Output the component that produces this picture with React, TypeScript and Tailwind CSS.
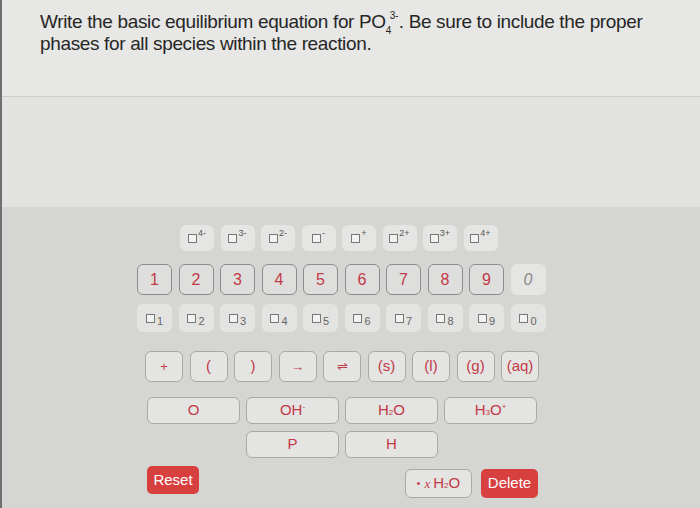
import React from "react";

const charges = ["4-", "3-", "2-", "-", "+", "2+", "3+", "4+"];
const digits = ["1", "2", "3", "4", "5", "6", "7", "8", "9", "0"];
const subs = ["1", "2", "3", "4", "5", "6", "7", "8", "9", "0"];
const symbols = ["+", "(", ")", "→", "⇌", "(s)", "(l)", "(g)", "(aq)"];

function Box() {
  return <span className="inline-block w-[9px] h-[9px] border border-[#777] bg-[#f2f2f0]" />;
}

const key = "rounded-[6px] bg-[#e4e4e2] border border-[#a9a9a7] flex items-center justify-center text-[15px] text-[#c23a48]";

export default function App() {
  return (
    <div
      className="w-[700px] h-[508px] overflow-hidden bg-[#d5d5d3] border-l-2 border-[#6f6f6f] flex flex-col"
      style={{ fontFamily: "'Liberation Sans', Arial, sans-serif" }}
    >
      {/* Question */}
      <div className="h-[97px] bg-[#e7e7e5] border-b border-[#cdcdcb] pl-[38px] pt-[11px]">
        <p className="text-[19px] leading-[22px] text-[#262626] tracking-[-0.35px]">
          Write the basic equilibrium equation for PO
          <span className="relative inline-block w-[13px] h-0">
            <span className="absolute left-[4px] top-[-17px] text-[10px] leading-none">3-</span>
            <span className="absolute left-0 top-[-2px] text-[10px] leading-none">4</span>
          </span>
          . Be sure to include the proper
          <br />
          phases for all species within the reaction.
        </p>
      </div>
      <div className="h-[110px] bg-[#e2e2e0]" />

      {/* Keypad */}
      <div className="flex-1 pl-[135px] pt-[18px]">
        {/* charges */}
        <div className="flex gap-[6.5px] ml-[43px] h-[26px]">
          {charges.map((c) => (
            <div key={c} className="w-[34px] h-[26px] rounded-[6px] bg-[#e5e5e3] flex items-center justify-center text-[#555]">
              <Box />
              <span className="text-[9px] -mt-[8px] ml-[1px]">{c}</span>
            </div>
          ))}
        </div>
        {/* digits */}
        <div className="flex gap-[6.5px] mt-[13px]">
          {digits.map((d) => (
            <div
              key={d}
              className={`w-[35px] h-[31px] rounded-[6px] flex items-center justify-center text-[16px] ${
                d === "0" ? "bg-[#e5e5e3] text-[#8a8a8a] italic" : "bg-[#dededc] border border-[#8d8d8d] text-[#c23a48]"
              }`}
            >
              {d}
            </div>
          ))}
        </div>
        {/* subscripts */}
        <div className="flex gap-[6.5px] mt-[9px]">
          {subs.map((s) => (
            <div key={s} className="w-[35px] h-[28px] rounded-[6px] bg-[#e3e3e1] flex items-center justify-center text-[#666]">
              <Box />
              <span className="text-[11px] mt-[7px] ml-[2px]">{s}</span>
            </div>
          ))}
        </div>
        {/* symbols */}
        <div className="flex gap-[6.5px] mt-[19px] ml-[8px]">
          {symbols.map((s) => (
            <div key={s} className={`w-[38px] h-[31px] ${key}`}>
              {s === "+" || s === "→" || s === "⇌" ? <span className="text-[13px]">{s}</span> : s}
            </div>
          ))}
        </div>
        {/* species */}
        <div className="flex gap-[6px] mt-[15px] ml-[10px]">
          <div className={`w-[93px] h-[27px] ${key}`}>O</div>
          <div className={`w-[93px] h-[27px] ${key}`}>
            OH<sup className="text-[8px]">-</sup>
          </div>
          <div className={`w-[93px] h-[27px] ${key}`}>
            H<sub className="text-[8px]">2</sub>O
          </div>
          <div className={`w-[93px] h-[27px] ${key}`}>
            H<sub className="text-[8px]">3</sub>O<sup className="text-[8px]">+</sup>
          </div>
        </div>
        <div className="flex gap-[6px] mt-[7px] ml-[109px]">
          <div className={`w-[93px] h-[27px] ${key}`}>P</div>
          <div className={`w-[93px] h-[27px] ${key}`}>H</div>
        </div>
        {/* actions */}
        <div className="flex items-start mt-[8px] ml-[10px]">
          <div className="w-[52px] h-[28px] rounded-[5px] bg-[#d8403f] flex items-center justify-center text-[15px] text-white">
            Reset
          </div>
          <div className={`ml-[206px] mt-[3px] w-[67px] h-[29px] ${key}`}>
            <span className="text-[10px] mr-[4px]">•</span>
            <span className="italic text-[13px] mr-[3px]" style={{ fontFamily: "'Liberation Serif', serif" }}>
              x
            </span>
            H<sub className="text-[8px]">2</sub>O
          </div>
          <div className="ml-[9px] mt-[3px] w-[57px] h-[29px] rounded-[5px] bg-[#d8403f] flex items-center justify-center text-[15px] text-white">
            Delete
          </div>
        </div>
      </div>
    </div>
  );
}
